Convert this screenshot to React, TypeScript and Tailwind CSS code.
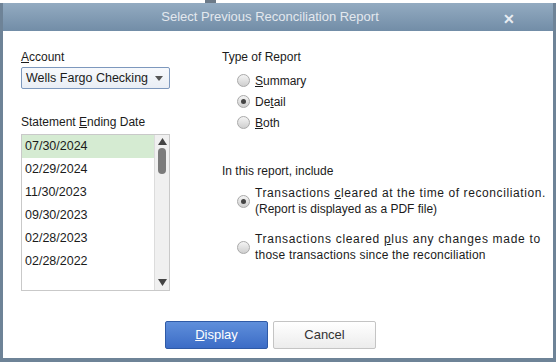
import React from "react";

const font = { fontFamily: '"Liberation Sans", Arial, sans-serif' };

function Radio({ checked }: { checked?: boolean }) {
  return (
    <span className="flex h-[13px] w-[13px] shrink-0 items-center justify-center rounded-full border border-[#a9a9a9] bg-gradient-to-b from-[#f4f4f4] to-[#cfcfcf]">
      {checked && <span className="h-[5px] w-[5px] rounded-full bg-[#444]" />}
    </span>
  );
}

const dates = ["07/30/2024", "02/29/2024", "11/30/2023", "09/30/2023", "02/28/2023", "02/28/2022"];

export default function App() {
  return (
    <div className="h-[362px] w-[556px] overflow-hidden bg-white text-[12px] text-[#1b1b1b]" style={font}>
      {/* top strip */}
      <div className="flex h-[3px]">
        <div className="ml-[205px] h-[3px] w-[11px] bg-[#6c7a88]" />
      </div>
      <div className="flex h-[359px] flex-col border-x-[3px] border-b-[4px] border-[#6e8397] bg-white">
        {/* title bar */}
        <div className="relative flex h-[28px] shrink-0 items-center justify-center bg-gradient-to-b from-[#93abc1] to-[#728da7] text-[13px] text-[#e3e8ee]">
          <span className="ml-[-16px]">Select Previous Reconciliation Report</span>
          <span className="absolute right-[38px] top-[6px] text-[14px] font-bold text-[#e8edf2]">✕</span>
        </div>

        <div className="flex flex-1 flex-col">
          <div className="flex pt-[19px]">
            {/* left column */}
            <div className="ml-[18px] flex w-[149px] flex-col">
              <div className="h-[14px] leading-[14px]">
                <span className="underline">A</span>ccount
              </div>
              <div className="mt-[3px] flex h-[22px] items-center justify-between rounded-[2px] border border-[#7d98bd] bg-gradient-to-b from-[#f7f9fc] to-[#e9eef5] pl-[4px] pr-[6px] text-[12.5px]">
                <span>Wells Fargo Checking</span>
                <svg width="8" height="5" viewBox="0 0 8 5">
                  <path d="M0 0h8L4 5z" fill="#555" />
                </svg>
              </div>
              <div className="mt-[26px] h-[14px] leading-[14px]">
                Statement <span className="underline">E</span>nding Date
              </div>
              <div className="mt-[5px] flex h-[157px] border border-[#c9c9c9] bg-white">
                <div className="flex flex-1 flex-col">
                  {dates.map((d, i) => (
                    <div
                      key={d}
                      className={`flex h-[23px] items-center pl-[3px] text-[12.5px] ${i === 0 ? "bg-[#d5ebd2]" : ""}`}
                    >
                      {d}
                    </div>
                  ))}
                </div>
                <div className="flex w-[15px] flex-col items-center border-l border-[#dcdcdc] bg-[#f0f0f0]">
                  <svg className="mt-[3px]" width="9" height="7" viewBox="0 0 9 7">
                    <path d="M4.5 0L9 7H0z" fill="#444" />
                  </svg>
                  <div className="mt-[3px] h-[26px] w-[8px] rounded-[4px] bg-[#7b7b7b]" />
                  <div className="flex-1" />
                  <svg className="mb-[4px]" width="9" height="7" viewBox="0 0 9 7">
                    <path d="M0 0h9L4.5 7z" fill="#444" />
                  </svg>
                </div>
              </div>
            </div>

            {/* right column */}
            <div className="ml-[52px] flex flex-col">
              <div className="h-[14px] leading-[14px]">Type of Report</div>
              <div className="mt-[6px] flex flex-col pl-[15px]">
                <div className="flex h-[21px] items-center gap-[5px]">
                  <Radio />
                  <span>
                    <span className="underline">S</span>ummary
                  </span>
                </div>
                <div className="flex h-[21px] items-center gap-[5px]">
                  <Radio checked />
                  <span>
                    De<span className="underline">t</span>ail
                  </span>
                </div>
                <div className="flex h-[21px] items-center gap-[5px]">
                  <Radio />
                  <span>
                    <span className="underline">B</span>oth
                  </span>
                </div>
              </div>

              <div className="mt-[31px] h-[14px] leading-[14px]">In this report, include</div>
              <div className="mt-[7px] flex items-center gap-[5px] pl-[15px]">
                <Radio checked />
                <div className="leading-[16px]">
                  <div className="tracking-[0.6px]">
                    Transactions <span className="underline">c</span>leared at the time of reconciliation.
                  </div>
                  <div>(Report is displayed as a PDF file)</div>
                </div>
              </div>
              <div className="mt-[14px] flex items-center gap-[5px] pl-[15px]">
                <Radio />
                <div className="leading-[16px]">
                  <div className="tracking-[0.7px]">
                    Transactions cleared <span className="underline">p</span>lus any changes made to
                  </div>
                  <div className="tracking-[0.2px]">those transactions since the reconciliation</div>
                </div>
              </div>
            </div>
          </div>

          {/* buttons */}
          <div className="mt-[30px] flex gap-[5px] pl-[162px]">
            <button className="flex h-[28px] w-[103px] items-center justify-center rounded-[2px] border border-[#2f5aa6] bg-gradient-to-b from-[#5f8fdb] to-[#3c6cc6] text-[13px] text-white">
              <span>
                <span className="underline">D</span>isplay
              </span>
            </button>
            <button className="flex h-[28px] w-[103px] items-center justify-center rounded-[2px] border border-[#c4c4c4] bg-gradient-to-b from-[#ffffff] to-[#ececec] text-[13px] text-[#333]">
              Cancel
            </button>
          </div>
        </div>
      </div>
    </div>
  );
}
